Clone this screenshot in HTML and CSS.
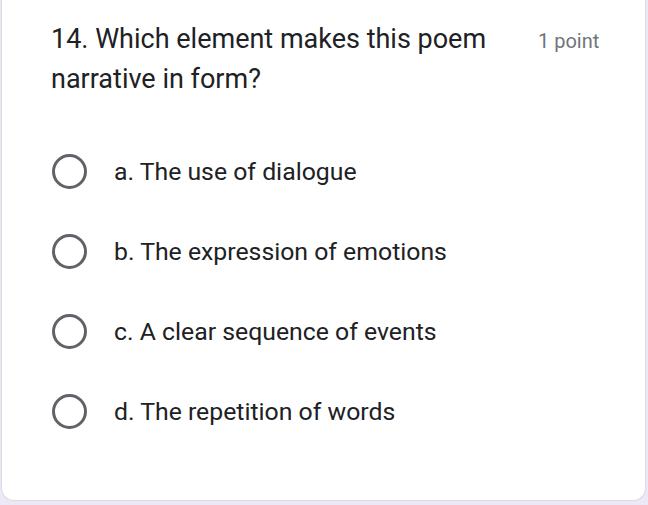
FILE: index.html
```html
<!DOCTYPE html>
<html>
<head>
<meta charset="utf-8">
<link rel="stylesheet" href="styles.css">
</head>
<body>
<div class="card">
  <div class="header">
    <div class="title">14. Which element makes this poem narrative in form?</div>
    <div class="points">1 point</div>
  </div>
  <div class="options">
    <div class="option"><span class="radio"></span><span class="label">a. The use of dialogue</span></div>
    <div class="option"><span class="radio"></span><span class="label">b. The expression of emotions</span></div>
    <div class="option"><span class="radio"></span><span class="label">c. A clear sequence of events</span></div>
    <div class="option"><span class="radio"></span><span class="label">d. The repetition of words</span></div>
  </div>
</div>
</body>
</html>
```
FILE: styles.css
```css
html, body {
  margin: 0;
  padding: 0;
}
body {
  background: #ede8f6;
  font-family: Roboto, "Noto Sans", sans-serif;
  width: 648px;
  height: 505px;
  overflow: hidden;
}
.card {
  margin-left: 1px;
  width: 645px;
  background: #fff;
  border: 1px solid #dadce0;
  border-top: none;
  border-radius: 0 0 13px 13px;
  padding: 19px 0 48px 49px;
  box-sizing: border-box;
  height: 501px;
}
.header {
  display: flex;
  align-items: flex-start;
}
.title {
  width: 461px;
  font-size: 27px;
  line-height: 40px;
  color: #202124;
}
.points {
  margin-left: 26px;
  margin-top: 7px;
  font-size: 20px;
  line-height: 30px;
  color: #70757a;
}
.options {
  margin-top: 32px;
  display: flex;
  flex-direction: column;
}
.option {
  height: 80px;
  display: flex;
  align-items: center;
}
.radio {
  width: 29px;
  height: 29px;
  border: 3.5px solid #5f6368;
  border-radius: 50%;
  margin-left: 1px;
  flex: none;
}
.label {
  margin-left: 27px;
  font-size: 24.8px;
  color: #202124;
}
```
